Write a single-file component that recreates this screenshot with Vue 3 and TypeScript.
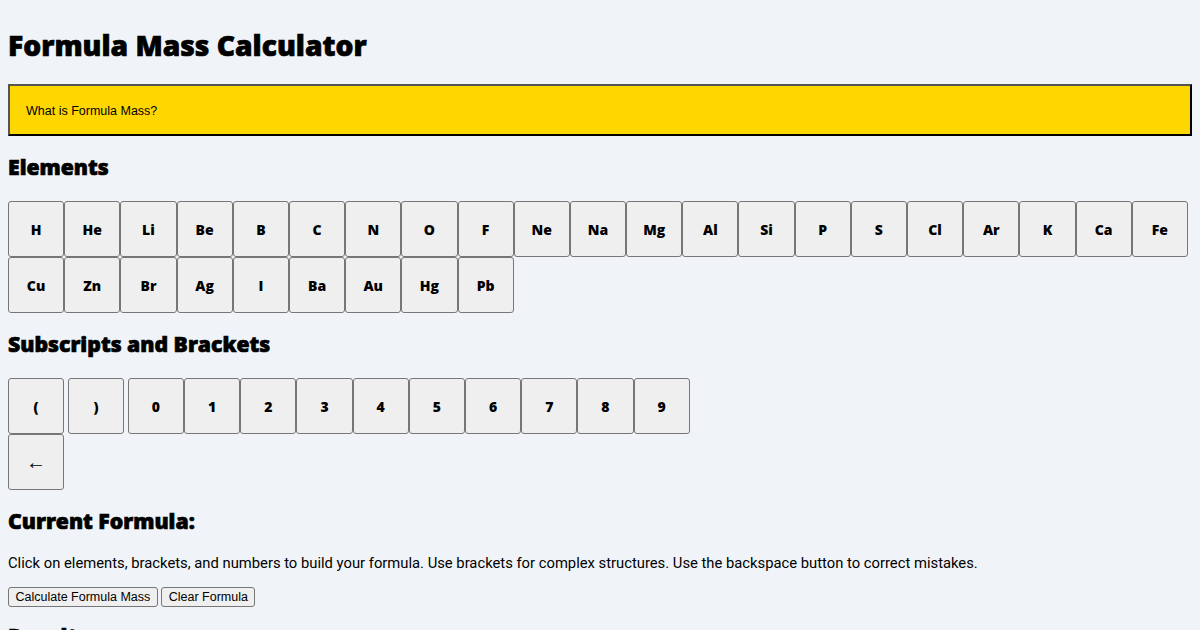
<script setup lang="ts">
const row1 = ['H','He','Li','Be','B','C','N','O','F','Ne','Na','Mg','Al','Si','P','S','Cl','Ar','K','Ca','Fe','Cu','Zn','Br','Ag','I','Ba','Au','Hg','Pb']
const digits = ['0','1','2','3','4','5','6','7','8','9']
</script>

<template>
  <main class="page">
    <h1>Formula Mass Calculator</h1>
    <button class="info">What is Formula Mass?</button>
    <h2>Elements</h2>
    <div class="keys">
      <button v-for="e in row1" :key="e" class="key">{{ e }}</button>
    </div>
    <h2>Subscripts and Brackets</h2>
    <div class="keys second">
      <button class="key bracket">(</button>
      <button class="key bracket">)</button>
      <button v-for="d in digits" :key="d" class="key">{{ d }}</button>
      <span class="break"></span>
      <button class="key arrow">←</button>
    </div>
    <h2 class="current">Current Formula:</h2>
    <p class="hint">Click on elements, brackets, and numbers to build your formula. Use brackets for complex structures. Use the backspace button to correct mistakes.</p>
    <div class="actions">
      <button class="action">Calculate Formula Mass</button>
      <button class="action">Clear Formula</button>
    </div>
    <h2>Result:</h2>
  </main>
</template>

<style>
html, body { margin: 0; background: #f0f4f8; overflow: hidden; }
</style>

<style scoped>
.page { padding: 8px; height: 614px; overflow: hidden; font-family: Roboto, sans-serif; color: #000; }
h1, h2 { font-family: "Open Sans", sans-serif; font-weight: 800; margin: 0; -webkit-text-stroke: 0.7px #000; }
h1 { font-size: 28.2px; line-height: 38px; margin: 18px 0 20px; }
h2 { font-size: 21.2px; line-height: 24px; margin-bottom: 22px; }
h2.current { margin-bottom: 20px; }
.info { display: block; width: 100%; height: 52px; box-sizing: border-box; text-align: left; padding: 2px 16px 0; background: #ffd700; border: 2px outset #000; font: 12.5px "Liberation Sans", sans-serif; color: #000; margin-bottom: 19px; }
.keys { display: flex; flex-wrap: wrap; margin-bottom: 19px; }
.second { margin-bottom: 19px; }
.key { width: 56.2px; height: 56px; box-sizing: border-box; padding: 0; background: #efefef; border: 1px solid #767676; border-radius: 3px; font-family: "Open Sans", sans-serif; font-weight: 800; font-size: 14px; color: #000; }
.bracket { margin-right: 3.75px; }
.break { flex-basis: 100%; height: 0; }
.arrow { font-family: Roboto, sans-serif; font-weight: 400; font-size: 20px; }
.hint { font-size: 14.79px; line-height: 20px; margin: 0 0 14px; }
.actions { display: flex; gap: 3.5px; margin-bottom: 17px; }
.action { height: 20px; box-sizing: border-box; padding: 0 6.5px; background: #efefef; border: 1px solid #767676; border-radius: 3px; font: 12.5px "Liberation Sans", sans-serif; color: #000; }
</style>
